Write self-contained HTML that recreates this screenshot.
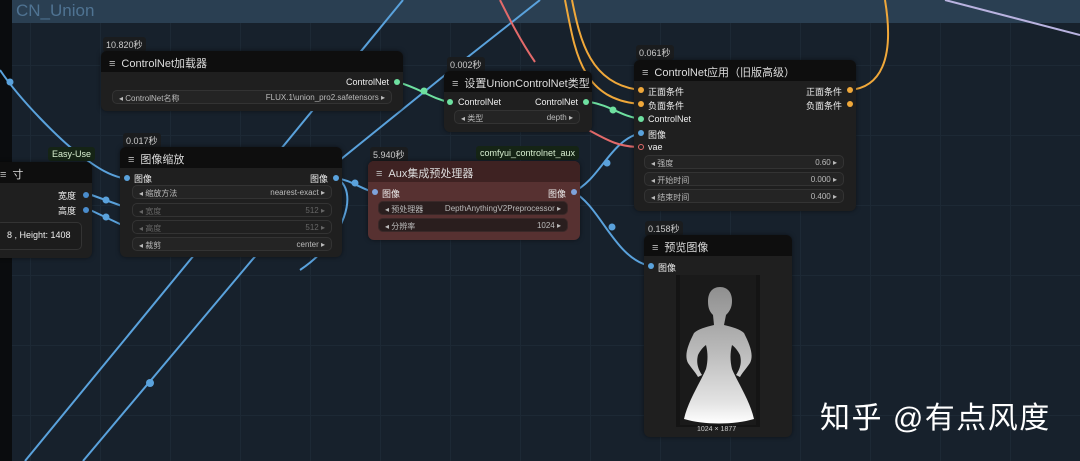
<!DOCTYPE html>
<html><head><meta charset="utf-8">
<style>
*{margin:0;padding:0;box-sizing:border-box}
body{width:1080px;height:461px;overflow:hidden;background:#141d26;font-family:"Liberation Sans","Noto Sans CJK SC",sans-serif;position:relative;color:#ddd}
.bg{position:absolute;inset:0;background:
linear-gradient(#1d2935 1px,transparent 1px) 0 -5px/70px 70px,
linear-gradient(90deg,#1d2935 1px,transparent 1px) -40px 0/70px 70px,#17212c}
.strip{position:absolute;left:0;top:0;width:12px;height:461px;background:#0a0c0e}
.ghead{position:absolute;left:12px;top:0;width:1068px;height:23px;background:#2a3f52}
.gtitle{position:absolute;left:16px;top:1px;font-size:17px;color:#4f7392}
.node{position:absolute;background:#1f1f1f;border-radius:6px;box-shadow:0 0 4px rgba(0,0,0,.5)}
.hd{height:21px;background:#0e0e0e;border-radius:6px 6px 0 0;font-size:11px;color:#ddd;padding:4px 0 0 8px;white-space:nowrap}
.hd:before{content:"≡";color:#bbb;margin-right:6px}
.t{position:absolute;font-size:9px;color:#ccc;background:#1a1c1e;padding:1px 3px;border-radius:3px;white-space:nowrap}
.badge{position:absolute;font-size:9px;color:#d8efd0;background:#152415;padding:2px 4px;border-radius:3px;white-space:nowrap}
.row{position:absolute;font-size:9px;color:#eee;white-space:nowrap}
.dot{position:absolute;width:6px;height:6px;border-radius:50%}
.w{position:absolute;height:14px;background:#242424;border:1px solid #333;border-radius:5px;font-size:8px;color:#bbb;padding:2px 6px;white-space:nowrap}
.w .r{position:absolute;right:6px;top:2px}
.dis{color:#666}
.wm{position:absolute;left:820px;top:393px;font-size:30px;color:#fff;white-space:nowrap;letter-spacing:1.5px}
</style></head><body>
<div class="bg"></div>
<div class="strip"></div>
<div class="ghead"></div>
<div class="gtitle">CN_Union</div>
<svg width="1080" height="461" style="position:absolute;left:0;top:0" fill="none" stroke-width="2">
<g stroke="#5aa2dc">
<path d="M0 70 C20 100 60 140 80 155 C100 170 110 175 122 178"/>
<path d="M25 461 L190 260 L403 0"/>
<path d="M83 461 L252 260 L340 160 L445 75 L540 0"/>
<path d="M86 193 L122 206"/><path d="M86 208 L122 225"/>
<path d="M336 178 C350 180 360 188 373 192"/>
<path d="M336 178 C360 190 345 240 300 270"/>
<path d="M573 192 C600 180 610 140 641 133"/>
<path d="M573 192 C600 205 615 260 651 266"/>
</g>
<g fill="#5aa2dc"><circle cx="10" cy="82" r="3.5"/><circle cx="150" cy="383" r="4"/><circle cx="106" cy="200" r="3.5"/><circle cx="106" cy="217" r="3.5"/><circle cx="355" cy="183" r="3.5"/><circle cx="607" cy="163" r="3.5"/><circle cx="612" cy="227" r="3.5"/></g>
<g stroke="#6ee0a0"><path d="M397 82 C420 88 430 98 449 102"/><path d="M590 102 C612 106 620 116 641 119"/></g>
<g fill="#6ee0a0"><circle cx="424" cy="91" r="3.5"/><circle cx="613" cy="110" r="3.5"/></g>
<g stroke="#e36a6a"><path d="M500 0 C510 20 520 40 535 62"/><path d="M585 128 C610 142 620 147 641 147"/></g>
<g stroke="#f0a83a"><path d="M572 0 C580 40 590 85 641 90"/><path d="M565 0 C575 50 580 100 641 104"/><path d="M849 90 C880 88 895 60 885 0"/></g>
<path d="M945 0 L1080 35" stroke="#b9b3e0"/>
</svg>

<div class="badge" style="left:48px;top:147px">Easy-Use</div>
<div class="node" style="left:-10px;top:162px;width:102px;height:96px">
<div class="hd" style="padding-left:10px">寸</div>
<div class="row" style="right:16px;top:27px">宽度</div><div class="dot" style="left:93px;top:30px;background:#4a8ccc"></div>
<div class="row" style="right:16px;top:42px">高度</div><div class="dot" style="left:93px;top:45px;background:#4a8ccc"></div>
<div class="w" style="left:6px;top:60px;width:86px;height:28px;background:#1c1c1c;font-size:9px;color:#eee;padding:7px 10px">8 , Height: 1408</div>
</div>

<div class="t" style="left:103px;top:37px">10.820秒</div>
<div class="node" style="left:101px;top:51px;width:302px;height:60px">
<div class="hd">ControlNet加载器</div>
<div class="row" style="right:14px;top:26px">ControlNet</div><div class="dot" style="left:293px;top:28px;background:#6ee0a0"></div>
<div class="w" style="left:11px;top:39px;width:280px">◂ ControlNet名称<span class="r">FLUX.1\union_pro2.safetensors ▸</span></div>
</div>

<div class="t" style="left:123px;top:133px">0.017秒</div>
<div class="node" style="left:120px;top:147px;width:222px;height:110px">
<div class="hd">图像缩放</div>
<div class="dot" style="left:4px;top:28px;background:#5aa2dc"></div><div class="row" style="left:14px;top:25px">图像</div>
<div class="row" style="right:14px;top:25px">图像</div><div class="dot" style="left:213px;top:28px;background:#5aa2dc"></div>
<div class="w" style="left:12px;top:38px;width:200px">◂ 缩放方法<span class="r">nearest-exact ▸</span></div>
<div class="w dis" style="left:12px;top:56px;width:200px;background:#202020">◂ 宽度<span class="r">512 ▸</span></div>
<div class="w dis" style="left:12px;top:73px;width:200px;background:#202020">◂ 高度<span class="r">512 ▸</span></div>
<div class="w" style="left:12px;top:90px;width:200px">◂ 裁剪<span class="r">center ▸</span></div>
</div>

<div class="t" style="left:447px;top:57px">0.002秒</div>
<div class="node" style="left:444px;top:71px;width:148px;height:61px">
<div class="hd">设置UnionControlNet类型</div>
<div class="dot" style="left:3px;top:28px;background:#6ee0a0"></div><div class="row" style="left:14px;top:26px">ControlNet</div>
<div class="row" style="right:14px;top:26px">ControlNet</div><div class="dot" style="left:139px;top:28px;background:#6ee0a0"></div>
<div class="w" style="left:10px;top:39px;width:126px">◂ 类型<span class="r">depth ▸</span></div>
</div>

<div class="t" style="left:370px;top:147px">5.940秒</div>
<div class="badge" style="left:476px;top:146px">comfyui_controlnet_aux</div>
<div class="node" style="left:368px;top:161px;width:212px;height:79px;background:#573131">
<div class="hd" style="background:#3e2222">Aux集成预处理器</div>
<div class="dot" style="left:4px;top:28px;background:#7ea3dc"></div><div class="row" style="left:14px;top:26px">图像</div>
<div class="row" style="right:14px;top:26px">图像</div><div class="dot" style="left:203px;top:28px;background:#7ea3dc"></div>
<div class="w" style="left:10px;top:40px;width:190px;background:#2a1e1e;border-color:#3a2828">◂ 预处理器<span class="r">DepthAnythingV2Preprocessor ▸</span></div>
<div class="w" style="left:10px;top:57px;width:190px;background:#2a1e1e;border-color:#3a2828">◂ 分辨率<span class="r">1024 ▸</span></div>
</div>

<div class="t" style="left:636px;top:45px">0.061秒</div>
<div class="node" style="left:634px;top:60px;width:222px;height:151px">
<div class="hd">ControlNet应用（旧版高级）</div>
<div class="dot" style="left:4px;top:27px;background:#f0a83a"></div><div class="row" style="left:14px;top:25px">正面条件</div>
<div class="dot" style="left:4px;top:41px;background:#f0a83a"></div><div class="row" style="left:14px;top:39px">负面条件</div>
<div class="dot" style="left:4px;top:56px;background:#6ee0a0"></div><div class="row" style="left:14px;top:54px">ControlNet</div>
<div class="dot" style="left:4px;top:70px;background:#5aa2dc"></div><div class="row" style="left:14px;top:68px">图像</div>
<div class="dot" style="left:4px;top:84px;border:1.5px solid #e36a6a"></div><div class="row" style="left:14px;top:82px">vae</div>
<div class="row" style="right:14px;top:25px">正面条件</div><div class="dot" style="left:213px;top:27px;background:#f0a83a"></div>
<div class="row" style="right:14px;top:39px">负面条件</div><div class="dot" style="left:213px;top:41px;background:#f0a83a"></div>
<div class="w" style="left:10px;top:95px;width:200px">◂ 强度<span class="r">0.60 ▸</span></div>
<div class="w" style="left:10px;top:112px;width:200px">◂ 开始时间<span class="r">0.000 ▸</span></div>
<div class="w" style="left:10px;top:129px;width:200px">◂ 结束时间<span class="r">0.400 ▸</span></div>
</div>

<div class="t" style="left:645px;top:221px">0.158秒</div>
<div class="node" style="left:644px;top:235px;width:148px;height:202px">
<div class="hd">预览图像</div>
<div class="dot" style="left:4px;top:28px;background:#5aa2dc"></div><div class="row" style="left:14px;top:26px">图像</div>
<svg style="position:absolute;left:32px;top:40px" width="84" height="152">
<defs><linearGradient id="g" x1="0" y1="0" x2="0" y2="1"><stop offset="0" stop-color="#8f8f8f"/><stop offset=".45" stop-color="#b8b8b8"/><stop offset=".85" stop-color="#e4e4e4"/><stop offset="1" stop-color="#ffffff"/></linearGradient></defs>
<rect width="84" height="152" fill="#141414"/>
<rect x="4" y="0" width="76" height="150" fill="#1a1a1a"/>
<path fill="url(#g)" d="M44 12 C36 12 32 18 32 26 C32 32 33 36 37 40 L38 50 C30 52 22 54 18 58 C12 70 8 80 12 88 C16 94 20 98 22 102 L26 100 C22 94 20 88 22 80 C24 76 27 72 30 70 C32 78 32 86 30 94 C24 108 12 126 8 144 C28 150 58 150 78 144 C74 126 62 108 56 94 C54 86 54 78 56 70 C59 72 62 76 64 80 C66 88 64 94 60 100 L64 102 C66 98 70 94 74 88 C78 80 74 70 68 58 C64 54 56 52 48 50 L50 40 C54 36 56 32 56 26 C56 18 52 12 44 12Z"/>
</svg>
<div class="row" style="left:53px;top:191px;font-size:7px;color:#ccc">1024 × 1877</div>
</div>

<div class="wm">知乎 @有点风度</div>
</body></html>
